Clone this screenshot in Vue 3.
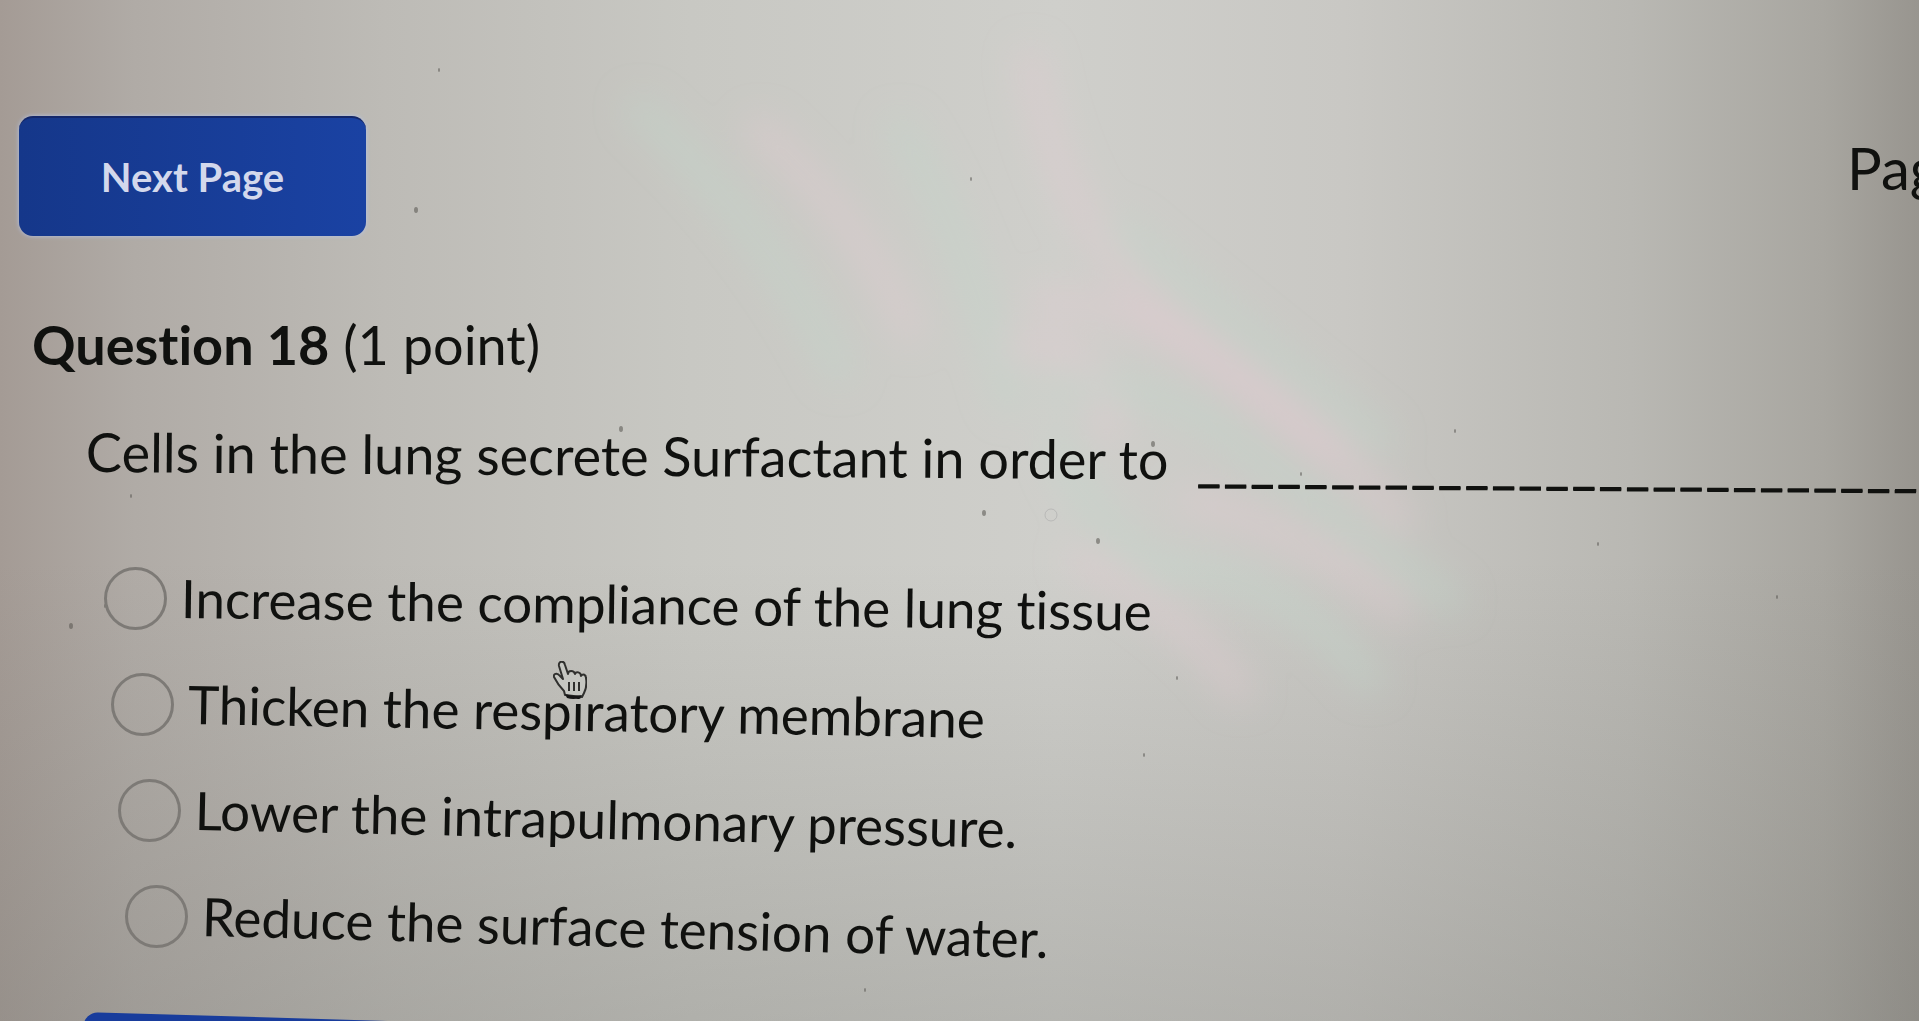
<script setup>
import { ref } from 'vue'

const selected = ref(null)
const blanks = 27
const options = [
  { id: 'a', text: 'Increase the compliance of the lung tissue', indent: 0, tilt: 0.75 },
  { id: 'b', text: 'Thicken the respiratory membrane', indent: 7, tilt: 1 },
  { id: 'c', text: 'Lower the intrapulmonary pressure.', indent: 14, tilt: 1.25 },
  { id: 'd', text: 'Reduce the surface tension of water.', indent: 21, tilt: 1.5 },
]
const specks = [
  [439, 70, 2], [416, 210, 3], [971, 179, 2], [984, 513, 3], [1098, 541, 3],
  [71, 626, 3], [131, 496, 2], [621, 429, 3], [1153, 444, 3], [1301, 474, 2],
  [1455, 431, 2], [1144, 755, 2], [1777, 597, 2], [1177, 678, 2], [865, 990, 2],
  [1598, 544, 2], [105, 606, 2], [1034, 470, 3],
]
</script>

<template>
  <main class="page">
    <svg class="sheen" viewBox="0 0 1919 1021" preserveAspectRatio="none" aria-hidden="true">
      <defs>
        <filter id="soft" x="-50%" y="-50%" width="200%" height="200%">
          <feGaussianBlur stdDeviation="17" />
        </filter>
      </defs>
      <g filter="url(#soft)" fill="none" stroke-linecap="round">
        <g stroke="#e2cbd0" stroke-opacity=".48" stroke-width="26">
          <path d="M760 130Q860 220 910 330" />
          <path d="M1030 60Q1060 230 1180 330T1330 450" />
          <path d="M1040 300Q1130 300 1230 370T1400 520" />
          <path d="M1010 350Q1090 320 1110 430" />
          <path d="M1190 500Q1310 530 1400 610" />
          <path d="M1080 560Q1180 610 1240 690" />
        </g>
        <g stroke="#c1d6ca" stroke-opacity=".45" stroke-width="26">
          <path d="M640 110Q770 230 840 370" />
          <path d="M900 130Q960 220 1010 400" />
          <path d="M1120 230Q1240 330 1380 440" />
          <path d="M1060 390Q1150 370 1250 450T1450 600" />
          <path d="M1170 570Q1280 570 1370 680" />
          <path d="M1060 440Q1070 500 1160 570" />
        </g>
      </g>
      <g fill="#55544f" fill-opacity=".55">
        <ellipse v-for="([x, y, r], i) in specks" :key="i" :cx="x" :cy="y" :rx="r - 1" :ry="r" />
      </g>
      <circle cx="1051" cy="515" r="6" fill="none" stroke="#aaa" stroke-opacity=".6" />
    </svg>

    <header class="bar">
      <button type="button" class="next">Next Page</button>
      <span class="pager">Page</span>
    </header>

    <form class="question" @submit.prevent>
      <h2 class="title"><strong>Question 18</strong> (1 point)</h2>
      <div class="prompt">
        <span id="prompt">Cells in the lung secrete Surfactant in order to</span>
        <span class="blank"><span v-for="n in blanks" :key="n">_</span></span>
      </div>
      <div class="options" role="radiogroup" aria-labelledby="prompt">
        <div v-for="o in options" :key="o.id" class="option" :style="{ marginLeft: o.indent + 'px' }">
          <input :id="o.id" v-model="selected" type="radio" name="answer" :value="o.id" />
          <label :for="o.id" :style="{ transform: `rotate(${o.tilt}deg)` }">{{ o.text }}</label>
        </div>
        <svg class="pointer" viewBox="0 0 34 38" aria-hidden="true">
          <path
            d="M12 34 11 30C8 27 3 20 1 16c-1-3 3-5 6-1l3 3L6 5C5 0 11-1 12 4l3 9c0-4 6-4 7 0 1-3 6-2 6 2 2-3 5-1 5 2 1 6 0 11-2 15l-2 4Z"
            fill="#c5c6c1" stroke="#30302e" stroke-width="2" stroke-linejoin="round"
          />
          <path d="M16 21v9M21 21v9M26 21v9" stroke="#30302e" stroke-width="2" />
          <path d="M12 33q8 3 17 1l-2 3q-7 2-13 0Z" fill="#161616" />
        </svg>
      </div>
      <button type="button" class="submit" aria-label="Next Page"></button>
    </form>
  </main>
</template>

<style>
body {
  margin: 0;
}
</style>

<style scoped>
.page {
  position: relative;
  box-sizing: border-box;
  height: 100vh;
  padding-top: 116px;
  overflow: hidden;
  color: #10110f;
  font-family: Lato, sans-serif;
  font-variant-ligatures: none;
  background:
    linear-gradient(to bottom, rgba(120, 120, 112, 0) 55%, rgba(120, 120, 115, 0.3) 100%),
    linear-gradient(to right, #a49b95 0%, #b0aba6 7%, #bdbbb6 20%, #c8c8c3 36%, #cfcfcb 55%, #c9c8c4 70%, #b9b8b3 85%, #a8a6a0 95%, #98958f 100%);
}

.sheen {
  position: absolute;
  inset: 0;
  width: 100%;
  height: 100%;
}

.bar {
  position: relative;
  display: flex;
  justify-content: space-between;
  align-items: flex-start;
  padding-left: 19px;
}

.next {
  width: 347px;
  height: 120px;
  border: 0;
  border-top: 2px solid #14286b;
  border-radius: 14px;
  background: linear-gradient(to right, #15378a, #1a42a3);
  box-shadow: 0 0 4px #b4c4ea;
  color: #d3d8ec;
  font: bold 40px/48px Lato, sans-serif;
}

.pager {
  width: 72px;
  padding-top: 18px;
  font-size: 58px;
  line-height: 68px;
  white-space: nowrap;
}

.question {
  position: relative;
}

.title {
  margin: 77px 0 45px 32px;
  font-size: 54px;
  font-weight: normal;
  line-height: 64px;
}

.prompt {
  display: flex;
  gap: 28px;
  margin-left: 86px;
  font-size: 54px;
  line-height: 60px;
  white-space: nowrap;
  transform: rotate(0.4deg);
  transform-origin: left center;
}

.blank {
  display: flex;
  gap: 2px;
  text-shadow: 0 1px 0 #10110f;
}

.options {
  position: relative;
  margin: 63px 0 43px 104px;
}

.option {
  display: flex;
  align-items: center;
  gap: 14px;
  height: 106px;
}

.option input {
  appearance: none;
  flex: none;
  width: 63px;
  height: 63px;
  margin: 0;
  border: 3px solid #7d7a76;
  border-radius: 50%;
}

.option input:checked {
  background: radial-gradient(#333 35%, transparent 38%);
}

.option label {
  font-size: 53px;
  line-height: 60px;
  white-space: nowrap;
  transform-origin: left center;
}

.pointer {
  position: absolute;
  top: 116px;
  left: 449px;
  width: 34px;
  height: 38px;
}

.submit {
  display: block;
  width: 347px;
  height: 120px;
  margin-left: 84px;
  border: 0;
  border-radius: 14px;
  background: #183c9c;
  transform: rotate(1.7deg);
  transform-origin: left top;
}
</style>
